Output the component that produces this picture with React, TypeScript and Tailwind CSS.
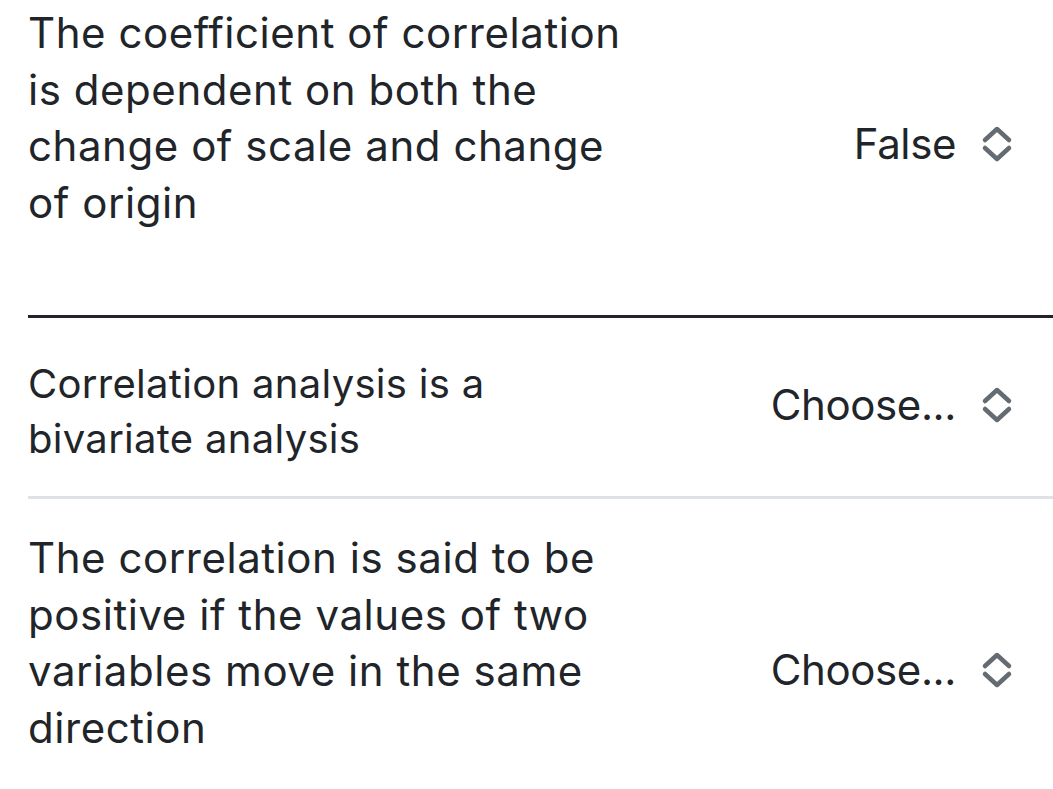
const questions = [
    {
        id: 1,
        text: 'The coefficient of correlation is dependent on both the change of scale and change of origin',
        value: 'False',
        row: 'pt-[5px] pb-[31px] border-b-[3px] border-[#212529]',
        textCls: 'pb-[52px] text-[42px] leading-[56.7px] tracking-[0.55px]',
        selectPad: '',
    },
    {
        id: 2,
        text: 'Correlation analysis is a bivariate analysis',
        value: 'Choose...',
        row: 'pt-[38px] pb-[30px] border-b-[3px] border-[#dee2e6]',
        textCls: 'text-[40px] leading-[55px] tracking-[0.3px]',
        selectPad: 'mb-[12px]',
    },
    {
        id: 3,
        text: 'The correlation is said to be positive if the values of two variables move in the same direction',
        value: 'Choose...',
        row: 'pt-[31px] pb-[40px]',
        textCls: 'pb-[54px] text-[42px] leading-[56.7px] tracking-[0.55px]',
        selectPad: '',
    },
];

const Chevrons = () => (
    <svg width="32" height="38" viewBox="0 0 32 38" fill="none" stroke="#646b73" strokeWidth="4.5" strokeLinecap="round" strokeLinejoin="round">
        <path d="M4 15 L16 4 L28 15" />
        <path d="M4 23 L16 34 L28 23" />
    </svg>
);

export default function App() {
    return (
        <div className="min-h-screen bg-white pl-[28px] font-['Inter',sans-serif] text-[#212529]">
            {questions.map((q) => (
                <div key={q.id} className={`flex items-center justify-between ${q.row}`}>
                    <p className={`w-[612px] ${q.textCls}`}>{q.text}</p>
                    <div className={`mr-[40px] flex items-center gap-[25px] ${q.selectPad}`}>
                        <span className="text-[42px] leading-[56px] tracking-[-0.4px]">{q.value}</span>
                        <Chevrons />
                    </div>
                </div>
            ))}
        </div>
    );
}
